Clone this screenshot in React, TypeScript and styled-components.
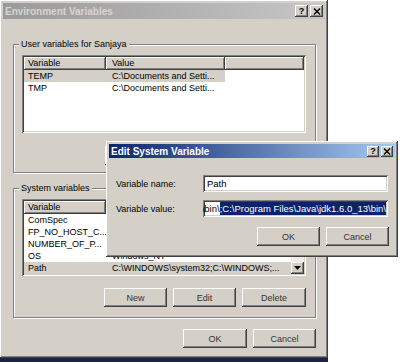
import styled, { createGlobalStyle } from "styled-components";

const GlobalStyle = createGlobalStyle`
  body {
    margin: 0;
    background: #ffffff;
    font-family: "Liberation Sans", Arial, sans-serif;
    font-size: 9px;
    color: #000;
  }
`;

const raised = `
  box-shadow: inset -1px -1px 0 #404040, inset 1px 1px 0 #ffffff,
    inset -2px -2px 0 #808080, inset 2px 2px 0 #d4d0c8;
`;
const sunken = `
  box-shadow: inset 1px 1px 0 #808080, inset -1px -1px 0 #ffffff,
    inset 2px 2px 0 #404040, inset -2px -2px 0 #d4d0c8;
`;

const Screen = styled.div`
  position: relative;
  width: 400px;
  height: 362px;
  overflow: hidden;
  background: #ffffff;
`;

const Window = styled.div`
  box-sizing: border-box;
  width: 328px;
  height: 358px;
  padding: 3px;
  background: #d4d0c8;
  display: flex;
  flex-direction: column;
  ${raised}
`;

const Taskbar = styled.div`
  width: 328px;
  height: 4px;
  background: #1b2444;
`;

const TitleBar = styled.div<{ active?: boolean }>`
  display: flex;
  align-items: center;
  height: ${(p) => (p.active ? "14px" : "16px")};
  padding: 0 2px 0 2px;
  background: ${(p) =>
    p.active
      ? "linear-gradient(90deg, #0a246a, #a6caf0)"
      : "linear-gradient(90deg, #9a9a9a, #c6c6c6)"};
  color: ${(p) => (p.active ? "#ffffff" : "#d8d5cf")};
  font-size: 10px;
  font-weight: bold;
  flex-shrink: 0;
`;

const TitleText = styled.span`
  flex: 1;
  white-space: nowrap;
`;

const TitleButton = styled.div<{ small?: boolean }>`
  box-sizing: border-box;
  width: ${(p) => (p.small ? "12px" : "13px")};
  height: ${(p) => (p.small ? "11px" : "12px")};
  margin-left: 2px;
  background: #d4d0c8;
  color: #000;
  display: flex;
  align-items: center;
  justify-content: center;
  font-size: 9px;
  font-weight: bold;
  ${raised}
`;

const Body = styled.div`
  display: flex;
  flex-direction: column;
  padding-left: 10px;
`;

const Group = styled.div<{ h: number; top: number }>`
  position: relative;
  box-sizing: border-box;
  width: 303px;
  height: ${(p) => p.h}px;
  margin-top: ${(p) => p.top}px;
  padding: 10px 9px 0 8px;
  border: 1px solid #808080;
  box-shadow: inset 1px 1px 0 #ffffff, 1px 1px 0 #ffffff;
  display: flex;
  flex-direction: column;
`;

const Legend = styled.span`
  position: absolute;
  top: -7px;
  left: 5px;
  padding: 0 2px;
  background: #d4d0c8;
  line-height: 12px;
  white-space: nowrap;
`;

const List = styled.div<{ h: number }>`
  box-sizing: border-box;
  height: ${(p) => p.h}px;
  padding: 2px;
  background: #ffffff;
  display: flex;
  overflow: hidden;
  ${sunken}
`;

const Table = styled.div`
  flex: 1;
  display: flex;
  flex-direction: column;
  min-width: 0;
`;

const HeaderRow = styled.div`
  display: flex;
  height: 13px;
  flex-shrink: 0;
`;

const HeaderCell = styled.div<{ w?: number; pad: number }>`
  box-sizing: border-box;
  width: ${(p) => (p.w ? `${p.w}px` : "auto")};
  flex: ${(p) => (p.w ? "none" : "1")};
  padding-left: ${(p) => p.pad}px;
  line-height: 13px;
  background: #d4d0c8;
  white-space: nowrap;
  box-shadow: inset -1px -1px 0 #404040, inset 1px 1px 0 #ffffff,
    inset -2px -2px 0 #808080;
`;

const Row = styled.div<{ selected?: boolean; wide?: boolean }>`
  display: flex;
  height: 12px;
  line-height: 12px;
  width: ${(p) => (p.wide ? "100%" : "201px")};
  background: ${(p) => (p.selected ? "#d4d0c8" : "transparent")};
`;

const Cell = styled.div<{ w?: number; pad: number }>`
  box-sizing: border-box;
  width: ${(p) => (p.w ? `${p.w}px` : "auto")};
  flex: ${(p) => (p.w ? "none" : "1")};
  padding-left: ${(p) => p.pad}px;
  white-space: nowrap;
  overflow: hidden;
`;

const ScrollBar = styled.div`
  width: 13px;
  flex-shrink: 0;
  display: flex;
  flex-direction: column;
  justify-content: flex-end;
  background: #efede9;
`;

const ScrollArrow = styled.div`
  box-sizing: border-box;
  height: 12px;
  background: #d4d0c8;
  display: flex;
  align-items: center;
  justify-content: center;
  ${raised}
`;

const ButtonRow = styled.div<{ top: number }>`
  display: flex;
  justify-content: flex-end;
  gap: 6px;
  margin-top: ${(p) => p.top}px;
`;

const Button = styled.div<{ w?: number }>`
  box-sizing: border-box;
  width: ${(p) => p.w ?? 63}px;
  height: 19px;
  background: #d4d0c8;
  color: #333;
  display: flex;
  align-items: center;
  justify-content: center;
  ${raised}
`;

const Footer = styled.div`
  width: 303px;
  display: flex;
  justify-content: flex-end;
  gap: 6px;
  margin-top: 11px;
`;

const EditDialog = styled.div`
  position: absolute;
  left: 106px;
  top: 141px;
  box-sizing: border-box;
  width: 292px;
  height: 116px;
  padding: 3px;
  background: #d4d0c8;
  display: flex;
  flex-direction: column;
  ${raised}
`;

const Form = styled.div`
  display: grid;
  grid-template-columns: 87px 185px;
  grid-auto-rows: 17px;
  row-gap: 8px;
  align-items: center;
  margin: 17px 0 0 7px;
`;

const Field = styled.div`
  box-sizing: border-box;
  height: 17px;
  padding: 2px 2px 2px 4px;
  background: #ffffff;
  display: flex;
  align-items: center;
  overflow: hidden;
  white-space: nowrap;
  font-size: 9.5px;
  ${sunken}
`;

const ScrolledField = styled(Field)`
  justify-content: flex-end;
  padding-right: 2px;
`;

const Selected = styled.span`
  background: #0a246a;
  color: #ffffff;
  line-height: 13px;
`;

const DialogButtons = styled.div`
  display: flex;
  justify-content: flex-end;
  gap: 6px;
  margin: 10px 6px 0 0;
`;

function CloseGlyph() {
  return (
    <svg width="8" height="7" viewBox="0 0 8 7">
      <path d="M1 0.5 L7 6.5 M7 0.5 L1 6.5" stroke="#000" strokeWidth="1.4" />
    </svg>
  );
}

function DownArrow() {
  return (
    <svg width="7" height="4" viewBox="0 0 7 4">
      <path d="M0 0 H7 L3.5 4 Z" fill="#000" />
    </svg>
  );
}

const userVars = [
  { name: "TEMP", value: "C:\\Documents and Setti...", selected: true },
  { name: "TMP", value: "C:\\Documents and Setti..." },
];

const systemVars = [
  { name: "ComSpec", value: "C:\\WINDOWS\\system32\\cmd.exe" },
  { name: "FP_NO_HOST_C...", value: "NO" },
  { name: "NUMBER_OF_P...", value: "1" },
  { name: "OS", value: "Windows_NT" },
  { name: "Path", value: "C:\\WINDOWS\\system32;C:\\WINDOWS;...", selected: true },
];

export default function App() {
  return (
    <Screen>
      <GlobalStyle />
      <Window>
        <TitleBar>
          <TitleText>Environment Variables</TitleText>
          <TitleButton>?</TitleButton>
          <TitleButton>
            <CloseGlyph />
          </TitleButton>
        </TitleBar>
        <Body>
          <Group h={129} top={25}>
            <Legend>User variables for Sanjaya</Legend>
            <List h={78}>
              <Table>
                <HeaderRow>
                  <HeaderCell w={82} pad={4}>Variable</HeaderCell>
                  <HeaderCell w={119} pad={6}>Value</HeaderCell>
                  <HeaderCell pad={0} />
                </HeaderRow>
                {userVars.map((v) => (
                  <Row key={v.name} selected={v.selected}>
                    <Cell w={82} pad={4}>{v.name}</Cell>
                    <Cell w={119} pad={6}>{v.value}</Cell>
                  </Row>
                ))}
              </Table>
            </List>
            <ButtonRow top={13}>
              <Button>New</Button>
              <Button>Edit</Button>
              <Button>Delete</Button>
            </ButtonRow>
          </Group>
          <Group h={130} top={15}>
            <Legend>System variables</Legend>
            <List h={77}>
              <Table>
                <HeaderRow>
                  <HeaderCell w={82} pad={4}>Variable</HeaderCell>
                  <HeaderCell pad={6}>Value</HeaderCell>
                </HeaderRow>
                {systemVars.map((v) => (
                  <Row key={v.name} selected={v.selected} wide>
                    <Cell w={82} pad={4}>{v.name}</Cell>
                    <Cell pad={6}>{v.value}</Cell>
                  </Row>
                ))}
              </Table>
              <ScrollBar>
                <ScrollArrow>
                  <DownArrow />
                </ScrollArrow>
              </ScrollBar>
            </List>
            <ButtonRow top={12}>
              <Button>New</Button>
              <Button>Edit</Button>
              <Button w={64}>Delete</Button>
            </ButtonRow>
          </Group>
          <Footer>
            <Button w={64}>OK</Button>
            <Button>Cancel</Button>
          </Footer>
        </Body>
      </Window>
      <Taskbar />

      <EditDialog>
        <TitleBar active>
          <TitleText>Edit System Variable</TitleText>
          <TitleButton small>?</TitleButton>
          <TitleButton small>
            <CloseGlyph />
          </TitleButton>
        </TitleBar>
        <Form>
          <span>Variable name:</span>
          <Field>Path</Field>
          <span>Variable value:</span>
          <ScrolledField>
            <span>C:\Program Files\QuickTime\QTSystem\;C:\Sun\bin\</span>
            <Selected>;C:\Program Files\Java\jdk1.6.0_13\bin\</Selected>
          </ScrolledField>
        </Form>
        <DialogButtons>
          <Button>OK</Button>
          <Button>Cancel</Button>
        </DialogButtons>
      </EditDialog>
    </Screen>
  );
}
